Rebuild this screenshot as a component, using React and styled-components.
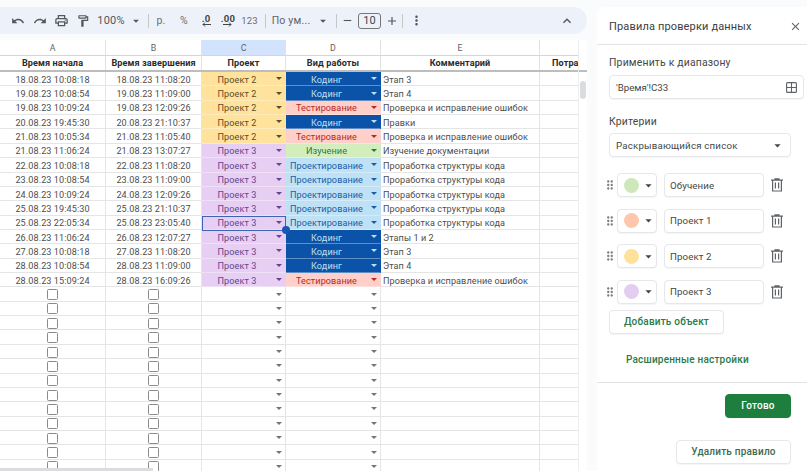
import React from 'react';
import styled, { createGlobalStyle } from 'styled-components';
import { MdUndo, MdRedo, MdOutlineLocalPrintshop, MdOutlineFormatPaint, MdArrowDropDown, MdClose, MdDragIndicator, MdMoreVert, MdExpandLess, MdAdd, MdRemove } from 'react-icons/md';

const GlobalStyle = createGlobalStyle`
  html, body { margin: 0; padding: 0; background: #f9fbfd; }
  body { width: 807px; height: 471px; overflow: hidden; font-family: Roboto, "Liberation Sans", sans-serif; }
`;

const Page = styled.div`
  display: flex;
  width: 807px;
  height: 471px;
  overflow: hidden;
`;

const Left = styled.div`
  width: 587px;
  flex: none;
  display: flex;
  flex-direction: column;
`;

const Toolbar = styled.div`
  height: 27px;
  margin-top: 7px;
  margin-bottom: 6px;
  padding-left: 7px;
  display: flex;
  align-items: center;
  background: #edf2fa;
  border-radius: 0 14px 14px 0;
  color: #444746;
  flex: none;
`;

const Slot = styled.div`
  width: ${p => p.$w}px;
  flex: none;
  display: flex;
  align-items: center;
  justify-content: center;
  font-size: ${p => p.$fs || 11.5}px;
  color: ${p => p.$color || '#53575a'};
  letter-spacing: 0.2px;
  white-space: nowrap;
  svg { display: block; }
`;

const Sep = styled.div`
  width: 1px;
  height: 14px;
  background: #c7c7c7;
  flex: none;
`;

const SizeBox = styled.div`
  width: 23px;
  height: 16px;
  border: 1px solid #747775;
  border-radius: 3px;
  box-sizing: border-box;
  display: flex;
  align-items: center;
  justify-content: center;
  font-size: 11px;
  color: #444746;
`;

const Decimal = styled.div`
  display: flex;
  flex-direction: column;
  align-items: center;
  font-size: 9.5px;
  font-weight: 700;
  line-height: 9px;
  color: #444746;
  svg { margin-top: -1px; }
`;

const Sheet = styled.div`
  position: relative;
  flex: 1;
  background: #fff;
  overflow: hidden;
`;

const Row = styled.div`
  display: grid;
  grid-template-columns: 106px 96px 84px 95px 159px 40px;
  height: ${p => p.$h}px;
`;

const ColHead = styled.div`
  box-sizing: border-box;
  display: flex;
  align-items: center;
  justify-content: center;
  font-size: 8.8px;
  color: #5f6368;
  background: ${p => (p.$active ? '#d3e3fd' : '#fff')};
  border-right: 1.5px solid #e1e3e3;
  border-bottom: 1px solid #d4d6d6;
`;

const FrozenRow = styled(Row)`
  border-bottom: 2px solid #bdbdbd;
  box-sizing: border-box;
`;

const HeadCell = styled.div`
  box-sizing: border-box;
  display: flex;
  align-items: center;
  justify-content: ${p => (p.$clip ? 'flex-start' : 'center')};
  padding-left: ${p => (p.$clip ? 12 : 0)}px;
  font-size: 9.1px;
  font-weight: 700;
  letter-spacing: 0.1px;
  color: #2a2a2a;
  white-space: nowrap;
  overflow: hidden;
  border-right: 1.5px solid #e1e3e3;
`;

const Cell = styled.div`
  position: relative;
  box-sizing: border-box;
  display: flex;
  align-items: center;
  justify-content: ${p => (p.$left ? 'flex-start' : 'center')};
  padding-left: ${p => (p.$left ? 2 : 0)}px;
  padding-top: 2px;
  font-size: 9.1px;
  letter-spacing: 0.08px;
  color: #4d4d4d;
  white-space: nowrap;
  overflow: hidden;
  border-right: 1px solid #e4e5e5;
  border-bottom: 1px solid #e4e5e5;
`;

const ChipCell = styled(Cell)`
  background: ${p => p.$bg || '#fff'};
  color: ${p => p.$fg || '#444'};
  padding-right: 13px;
  border-right-color: ${p => p.$bg || '#e4e5e5'};
  border-bottom-color: ${p => (p.$bg ? 'rgba(255,255,255,0.35)' : '#e4e5e5')};
`;

const Caret = styled.span`
  position: absolute;
  right: 3px;
  top: 50%;
  margin-top: -1.5px;
  width: 0;
  height: 0;
  border-left: 3px solid transparent;
  border-right: 3px solid transparent;
  border-top: 3.5px solid ${p => p.$color || '#757575'};
`;

const Check = styled.span`
  box-sizing: border-box;
  width: 11px;
  height: 11px;
  margin-top: -1px;
  border: 1.5px solid #8b8b8b;
  border-radius: 1.5px;
`;

const Selection = styled.div`
  position: absolute;
  left: 202px;
  top: 176px;
  width: 84px;
  height: 15px;
  box-sizing: border-box;
  border: 1.5px solid #3c64b4;
  pointer-events: none;
`;

const Handle = styled.div`
  position: absolute;
  left: 282px;
  top: 186px;
  width: 8px;
  height: 8px;
  border-radius: 50%;
  background: #1a56b8;
`;

const Track = styled.div`
  position: absolute;
  right: 0;
  top: 0;
  bottom: 0;
  width: 8px;
  background: #fff;
  border-left: 1px solid #eeeeee;
`;

const Thumb = styled.div`
  position: absolute;
  left: 1px;
  top: 41px;
  width: 6px;
  height: 18px;
  border-radius: 3px;
  background: #dadce0;
`;

const HScroll = styled.div`
  position: absolute;
  left: 0;
  bottom: 0;
  width: 153px;
  height: 3px;
  background: #dadce0;
`;

const FrozenLine = styled.div`
  position: absolute;
  left: 579px;
  top: 30px;
  width: 8px;
  height: 2px;
  background: #bdbdbd;
`;

const Panel = styled.aside`
  width: 210px;
  margin-left: 10px;
  margin-top: 7px;
  flex: none;
  background: #fff;
  border-radius: 8px 0 0 0;
  display: flex;
  flex-direction: column;
`;

const PanelHead = styled.div`
  height: 38px;
  box-sizing: border-box;
  border-bottom: 1px solid #e3e3e3;
  padding: 1px 5px 0 12px;
  display: flex;
  align-items: center;
  justify-content: space-between;
  font-size: 11px;
  letter-spacing: 0.15px;
  color: #3c4043;
  svg { color: #5f6368; }
`;

const PanelBody = styled.div`
  padding: 0 16px 0 12px;
  display: flex;
  flex-direction: column;
`;

const Label = styled.div`
  font-size: 10.4px;
  letter-spacing: 0.2px;
  color: #444746;
  line-height: 13px;
  margin-top: ${p => p.$mt}px;
`;

const box = `
  box-sizing: border-box;
  background: #fff;
  border: 1px solid #e6e7e8;
  border-radius: 4px;
  box-shadow: 0 1px 1px rgba(60, 64, 67, 0.05);
  display: flex;
  align-items: center;
`;

const RangeInput = styled.div`
  ${box}
  width: 195px;
  height: 24px;
  margin-top: 6px;
  padding: 0 6px 0 6px;
  justify-content: space-between;
  font-size: 9.7px;
  color: #444746;
  svg { color: #5f6368; }
`;

const SelectBox = styled.div`
  ${box}
  width: 182px;
  height: 24px;
  margin-top: 5px;
  padding: 0 5px 0 6px;
  justify-content: space-between;
  font-size: 9.7px;
  letter-spacing: 0.2px;
  color: #444746;
  svg { color: #444746; }
`;

const Rules = styled.div`
  margin-top: 16px;
  margin-left: -6px;
  display: flex;
  flex-direction: column;
  gap: 11.5px;
`;

const RuleRow = styled.div`
  display: flex;
  align-items: center;
  height: 24px;
  svg { flex: none; }
`;

const Grip = styled.div`
  width: 15px;
  flex: none;
  margin-left: -1px;
  display: flex;
  justify-content: center;
  color: #7b7f82;
`;

const ColorButton = styled.div`
  ${box}
  width: 40px;
  height: 24px;
  flex: none;
  padding-left: 6px;
  color: #444746;
`;

const Dot = styled.span`
  width: 15px;
  height: 15px;
  border-radius: 50%;
  flex: none;
  margin-right: 2px;
  background: ${p => p.$color};
`;

const RuleInput = styled.div`
  ${box}
  width: 100px;
  height: 24px;
  margin-left: 7px;
  padding-left: 5px;
  font-size: 9.7px;
  letter-spacing: 0.1px;
  color: #444746;
  flex: none;
`;

const Trash = styled.div`
  margin-left: 7px;
  color: #5f6368;
  display: flex;
`;

const Button = styled.div`
  ${box}
  justify-content: center;
  height: 24px;
  width: ${p => p.$w}px;
  font-size: 10px;
  font-weight: 500;
  letter-spacing: 0.2px;
  color: ${p => p.$color || '#2a7a4a'};
`;

const AddButton = styled(Button)`
  margin-top: 6px;
`;

const Advanced = styled.div`
  font-size: 10px;
  font-weight: 500;
  letter-spacing: 0.2px;
  color: #2a7a4a;
  padding: 19px 0 0 29px;
  height: 27px;
  line-height: 13px;
`;

const PanelDivider = styled.div`
  height: 1px;
  background: #e3e3e3;
  margin-top: 2px;
`;

const Footer = styled.div`
  display: flex;
  flex-direction: column;
  align-items: flex-end;
  gap: 22px;
  padding: 11px 16px 0 0;
`;

const DoneButton = styled(Button)`
  background: #1e7e3e;
  border-color: #1e7e3e;
  color: #fff;
`;

const columns = ['A', 'B', 'C', 'D', 'E', ''];

const project2 = { label: 'Проект 2', bg: '#ffe29c', fg: '#5c4c2a' };
const project3 = { label: 'Проект 3', bg: '#e6cff2', fg: '#64458f' };
const coding = { label: 'Кодинг', bg: '#0a53a8', fg: '#bfe1f6' };
const testing = { label: 'Тестирование', bg: '#ffcfc9', fg: '#b5291f' };
const learning = { label: 'Изучение', bg: '#d4edbc', fg: '#1f7a52' };
const design = { label: 'Проектирование', bg: '#bfe1f6', fg: '#1a5ca8' };

const fix = 'Проверка и исправление ошибок';
const struct = 'Проработка структуры кода';

const rows = [
  ['18.08.23 10:08:18', '18.08.23 11:08:20', project2, coding, 'Этап 3'],
  ['19.08.23 10:08:54', '19.08.23 11:09:00', project2, coding, 'Этап 4'],
  ['19.08.23 10:09:24', '19.08.23 12:09:26', project2, testing, fix],
  ['20.08.23 19:45:30', '20.08.23 21:10:37', project2, coding, 'Правки'],
  ['21.08.23 10:05:34', '21.08.23 11:05:40', project2, testing, fix],
  ['21.08.23 11:06:24', '21.08.23 13:07:27', project3, learning, 'Изучение документации'],
  ['22.08.23 10:08:18', '22.08.23 11:08:20', project3, design, struct],
  ['23.08.23 10:08:54', '23.08.23 11:09:00', project3, design, struct],
  ['24.08.23 10:09:24', '24.08.23 12:09:26', project3, design, struct],
  ['25.08.23 19:45:30', '25.08.23 21:10:37', project3, design, struct],
  ['25.08.23 22:05:34', '25.08.23 23:05:40', project3, design, struct],
  ['26.08.23 11:06:24', '26.08.23 12:07:27', project3, coding, 'Этапы 1 и 2'],
  ['27.08.23 10:08:18', '27.08.23 11:08:20', project3, coding, 'Этап 3'],
  ['28.08.23 10:08:54', '28.08.23 11:09:00', project3, coding, 'Этап 4'],
  ['28.08.23 15:09:24', '28.08.23 16:09:26', project3, testing, fix],
];

const rules = [
  { color: '#cfe8b9', label: 'Обучение' },
  { color: '#ffc6ab', label: 'Проект 1' },
  { color: '#ffe19c', label: 'Проект 2' },
  { color: '#e3cdf0', label: 'Проект 3' },
];

const emptyRows = Array.from({ length: 13 }, (_, i) => i);

const Arrow = ({ left }) => (
  <svg width="10" height="5" viewBox="0 0 10 5">
    <path d={left ? 'M10 2.5H2M4 .5L2 2.5l2 2' : 'M0 2.5h8M6 .5l2 2-2 2'} fill="none" stroke="#444746" strokeWidth="1" />
  </svg>
);

const TrashIcon = () => (
  <svg width="12" height="14" viewBox="0 0 12 14" fill="none" stroke="currentColor" strokeWidth="1.2">
    <path d="M0 2.2h12M4 2V.8h4V2M1.6 2.4V13h8.8V2.4M4.4 4.6v6M7.6 4.6v6" />
  </svg>
);

const RangeIcon = () => (
  <svg width="11" height="11" viewBox="0 0 11 11" fill="none" stroke="currentColor" strokeWidth="1.1">
    <rect x=".6" y=".6" width="9.8" height="9.8" rx="1" />
    <path d="M5.5 .6v9.8M.6 5.5h9.8" />
  </svg>
);

const Chip = ({ chip }) => (
  <ChipCell $bg={chip.bg} $fg={chip.fg}>
    {chip.label}
    <Caret $color={chip.fg} />
  </ChipCell>
);

const App = () => (
  <Page>
    <GlobalStyle />
    <Left>
      <Toolbar>
        <Slot $w={22}><MdUndo size={14} /></Slot>
        <Slot $w={21}><MdRedo size={14} /></Slot>
        <Slot $w={22}><MdOutlineLocalPrintshop size={15} /></Slot>
        <Slot $w={21}><MdOutlineFormatPaint size={14} /></Slot>
        <Slot $w={36} $fs={11}>100%</Slot>
        <Slot $w={14}><MdArrowDropDown size={16} /></Slot>
        <Slot $w={5} />
        <Sep />
        <Slot $w={24} $fs={10.5} $color="#6a6e71">р.</Slot>
        <Slot $w={22} $fs={10.5} $color="#6a6e71">%</Slot>
        <Slot $w={22}><Decimal>.0<Arrow left /></Decimal></Slot>
        <Slot $w={22}><Decimal>.00<Arrow /></Decimal></Slot>
        <Slot $w={21} $fs={9.5} $color="#6a6e71">123</Slot>
        <Slot $w={5} />
        <Sep />
        <Slot $w={50} $fs={10.5} $color="#5f6368">По ум...</Slot>
        <Slot $w={14}><MdArrowDropDown size={16} /></Slot>
        <Slot $w={6} />
        <Sep />
        <Slot $w={21}><MdRemove size={13} /></Slot>
        <SizeBox>10</SizeBox>
        <Slot $w={21}><MdAdd size={14} /></Slot>
        <Sep />
        <Slot $w={27}><MdMoreVert size={15} /></Slot>
        <Slot $w={125} />
        <Slot $w={24}><MdExpandLess size={16} /></Slot>
      </Toolbar>
      <Sheet>
        <Row $h={16}>
          {columns.map((c, i) => <ColHead key={i} $active={c === 'C'}>{c}</ColHead>)}
        </Row>
        <FrozenRow $h={16}>
          <HeadCell>Время начала</HeadCell>
          <HeadCell>Время завершения</HeadCell>
          <HeadCell>Проект</HeadCell>
          <HeadCell>Вид работы</HeadCell>
          <HeadCell>Комментарий</HeadCell>
          <HeadCell $clip>Потра</HeadCell>
        </FrozenRow>
        {rows.map((r, i) => (
          <Row key={i} $h={14.36}>
            <Cell>{r[0]}</Cell>
            <Cell>{r[1]}</Cell>
            <Chip chip={r[2]} />
            <Chip chip={r[3]} />
            <Cell $left>{r[4]}</Cell>
            <Cell />
          </Row>
        ))}
        {emptyRows.map(i => (
          <Row key={i} $h={14.36}>
            <Cell><Check /></Cell>
            <Cell><Check /></Cell>
            <ChipCell><Caret /></ChipCell>
            <ChipCell><Caret /></ChipCell>
            <Cell />
            <Cell />
          </Row>
        ))}
        <Track><Thumb /></Track>
        <FrozenLine />
        <Selection />
        <Handle />
        <HScroll />
      </Sheet>
    </Left>
    <Panel>
      <PanelHead>
        Правила проверки данных
        <MdClose size={13} />
      </PanelHead>
      <PanelBody>
        <Label $mt={11}>Применить к диапазону</Label>
        <RangeInput>
          'Время'!C33
          <RangeIcon />
        </RangeInput>
        <Label $mt={16}>Критерии</Label>
        <SelectBox>
          Раскрывающийся список
          <MdArrowDropDown size={15} />
        </SelectBox>
        <Rules>
          {rules.map(rule => (
            <RuleRow key={rule.label}>
              <Grip><MdDragIndicator size={14} /></Grip>
              <ColorButton>
                <Dot $color={rule.color} />
                <MdArrowDropDown size={15} />
              </ColorButton>
              <RuleInput>{rule.label}</RuleInput>
              <Trash><TrashIcon /></Trash>
            </RuleRow>
          ))}
        </Rules>
        <AddButton $w={115}>Добавить объект</AddButton>
      </PanelBody>
      <Advanced>Расширенные настройки</Advanced>
      <PanelDivider />
      <Footer>
        <DoneButton $w={66}>Готово</DoneButton>
        <Button $w={115} $color="#3c6b4a">Удалить правило</Button>
      </Footer>
    </Panel>
  </Page>
);

export default App;
